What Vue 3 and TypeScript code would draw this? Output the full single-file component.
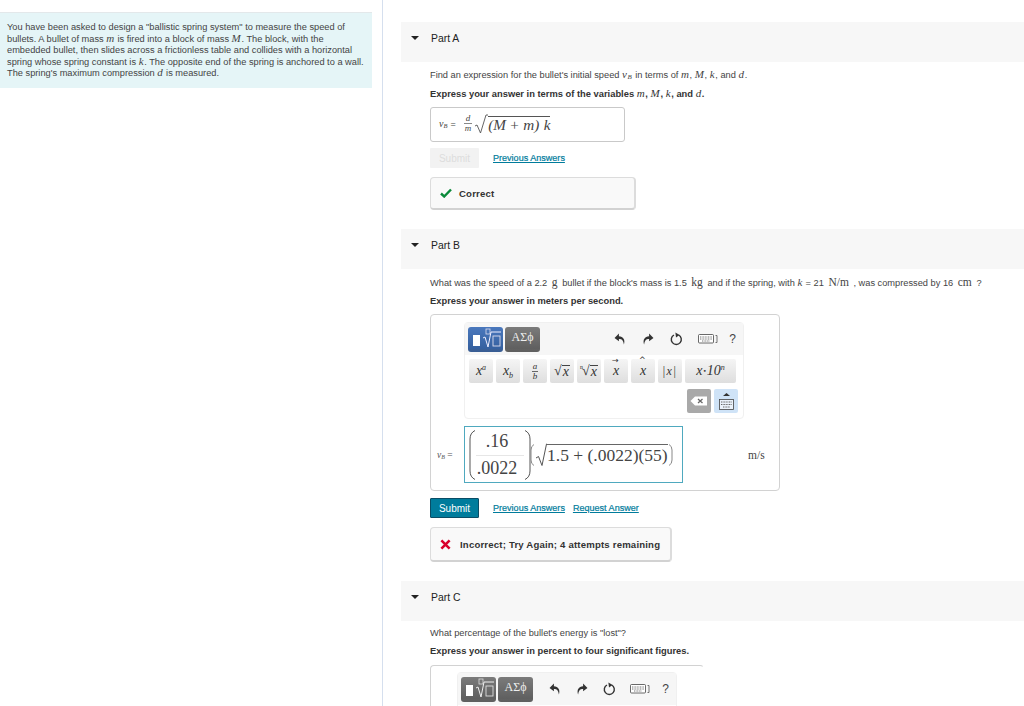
<script setup lang="ts">
const keys = [
  { id: 'pow', wide: false },
  { id: 'sub', wide: false },
  { id: 'frac', wide: false },
  { id: 'sqrt', wide: false },
  { id: 'root', wide: false },
  { id: 'vec', wide: false },
  { id: 'hat', wide: false },
  { id: 'abs', wide: false },
  { id: 'sci', wide: true },
]
</script>

<template>
  <div class="page">
    <aside class="left">
      <div class="intro">
        You have been asked to design a "ballistic spring system" to measure the speed of<br />
        bullets. A bullet of mass <i class="m">m</i> is fired into a block of mass <i class="m">M</i>. The block, with the<br />
        embedded bullet, then slides across a frictionless table and collides with a horizontal<br />
        spring whose spring constant is <i class="m">k</i>. The opposite end of the spring is anchored to a wall.<br />
        The spring's maximum compression <i class="m">d</i> is measured.
      </div>
    </aside>

    <main class="right">
      <section class="part part-a">
        <header class="part-head"><span class="tri"></span>Part A</header>
        <div class="part-body">
          <p class="q">Find an expression for the bullet's initial speed <i class="m">v<sub>B</sub></i> in terms of <i class="m">m</i>, <i class="m">M</i>, <i class="m">k</i>, and <i class="m">d</i>.</p>
          <p class="ins">Express your answer in terms of the variables <i class="m nb">m</i>, <i class="m nb">M</i>, <i class="m nb">k</i>, and <i class="m nb">d</i>.</p>
          <div class="ans-box">
            <span class="vb"><i>v<sub>B</sub></i></span><span class="eq">=</span>
            <span class="small-frac"><i>d</i><i class="den">m</i></span>
            <svg class="rad" width="14" height="20" viewBox="0 0 14 20"><path d="M1 12 L3 11 L6.500 19 L12 1 L14 1" fill="none" stroke="#555" stroke-width="0.9"/></svg>
            <span class="under"><i>(M</i> + <i>m) k</i></span>
          </div>
          <div class="actions">
            <button class="btn off" type="button">Submit</button>
            <a class="link">Previous Answers</a>
          </div>
          <div class="fb fb-ok">
            <svg width="12" height="10" viewBox="0 0 12 10"><path d="M1 5.500 L4.200 8.500 L11 1.500" fill="none" stroke="#0a8a3a" stroke-width="2.400"/></svg>
            <span>Correct</span>
          </div>
        </div>
      </section>

      <section class="part part-b">
        <header class="part-head"><span class="tri"></span>Part B</header>
        <div class="part-body">
          <p class="q">What was the speed of a 2.2 <span class="u">g</span> bullet if the block's mass is 1.5 <span class="u">kg</span> and if the spring, with <i class="m">k</i> = 21 <span class="u">N/m</span> , was compressed by 16 <span class="u">cm</span> ?</p>
          <p class="ins">Express your answer in meters per second.</p>

          <div class="editor">
            <div class="tools">
              <div class="tool-top">
                <span class="tab tab-blue">
                  <svg width="34" height="22" viewBox="0 0 34 22"><rect x="4" y="8" width="7" height="11" fill="#fff"/><rect x="17" y="2" width="4" height="5" fill="none" stroke="#dde" stroke-width=".8"/><path d="M14 11 L16 10 L19 20 L22 5 L32 5" fill="none" stroke="#eef" stroke-width="1"/><rect x="24" y="9" width="7" height="10" fill="none" stroke="#dde" stroke-width=".9"/></svg>
                </span>
                <span class="tab tab-grey">ΑΣϕ</span>
                <span class="acts">
                  <svg class="ic" width="12" height="12" viewBox="0.5 0.5 11 11"><path d="M5 1 L1 5 L5 8 V6 C7.500 5.700 9 7 9.600 11 C11 6.500 9 3.600 5 3.400 Z" fill="#333"/></svg>
                  <svg class="ic" width="12" height="12" viewBox="0.5 0.5 11 11"><path d="M7 1 L11 5 L7 8 V6 C4.500 5.700 3 7 2.400 11 C1 6.500 3 3.600 7 3.400 Z" fill="#333"/></svg>
                  <svg class="ic" width="13" height="14" viewBox="0 0 13 14"><path d="M8.600 3 A5 5 0 1 1 4 3" fill="none" stroke="#333" stroke-width="1.400"/><path d="M5.400 .6 L9.600 3 L6 5.400 Z" fill="#333"/></svg>
                  <svg class="ic kb" width="20" height="10" viewBox="0 0 20 10"><rect x=".5" y=".5" width="15" height="8.500" rx="1" fill="#fff" stroke="#444" stroke-width=".8"/><path d="M2 3h12M2 5h12M4 7h8" stroke="#777" stroke-width="1" stroke-dasharray="1 .6"/><path d="M17.500 1.500h1.500v7h-1.500" fill="none" stroke="#555" stroke-width=".8"/></svg>
                  <span class="help">?</span>
                </span>
              </div>
              <div class="tool-keys">
                <span v-for="k in keys" :key="k.id" class="key" :class="{ wide: k.wide }">
                  <template v-if="k.id === 'pow'"><i>x<sup>a</sup></i></template>
                  <template v-else-if="k.id === 'sub'"><i>x<sub>b</sub></i></template>
                  <template v-else-if="k.id === 'frac'"><span class="kfrac"><i>a</i><i class="kden">b</i></span></template>
                  <template v-else-if="k.id === 'sqrt'">√<i class="ol">x</i></template>
                  <template v-else-if="k.id === 'root'"><sup class="tiny">n</sup><span class="rt">√</span><i class="ol">x</i></template>
                  <template v-else-if="k.id === 'vec'"><i class="acc">x<b>→</b></i></template>
                  <template v-else-if="k.id === 'hat'"><i class="acc">x<b>^</b></i></template>
                  <template v-else-if="k.id === 'abs'"><span class="absk">|<i>x</i>|</span></template>
                  <template v-else><i>x</i><b class="dot">•</b><i>10<sup>n</sup></i></template>
                </span>
              </div>
              <div class="tool-keys end">
                <span class="key2 back">
                  <svg width="18" height="10" viewBox="0 0 18 10"><path d="M5 .5 H17 V9.500 H5 L.5 5 Z" fill="#fff"/><path d="M8 3 L12.500 7 M12.500 3 L8 7" stroke="#666" stroke-width="1.300"/></svg>
                </span>
                <span class="key2 kbd">
                  <svg width="15" height="17" viewBox="0 0 15 17"><path d="M7.500 0 L11 3 H4 Z" fill="#333"/><rect x=".5" y="6.500" width="14" height="10" fill="#eaf2fb" stroke="#444" stroke-width=".8"/><path d="M2 9h11M2 11.500h11M4 14h7" stroke="#666" stroke-width="1" stroke-dasharray="1 .6"/></svg>
                </span>
              </div>
            </div>

            <div class="expr-row">
              <span class="vb lbl"><i>v<sub>B</sub></i> =</span>
              <div class="expr">
                <svg class="par" width="7" height="50" viewBox="0 0 7 50"><path d="M6 .5 Q1 3 1 9 V41 Q1 47 6 49.500" fill="none" stroke="#555" stroke-width="1"/></svg>
                <span class="bigfrac"><span class="num">.16</span><span class="den2">.0022</span></span>
                <svg class="par" width="7" height="50" viewBox="0 0 7 50"><path d="M1 .5 Q6 3 6 9 V41 Q6 47 1 49.500" fill="none" stroke="#555" stroke-width="1"/></svg>
                <svg class="par p2" width="5" height="22" viewBox="0 0 5 22"><path d="M4 .5 Q1 2 1 6 V16 Q1 20 4 21.500" fill="none" stroke="#888" stroke-width="1"/></svg>
                <svg class="rad2" width="12" height="24" viewBox="0 0 12 24"><path d="M1 15 L3.500 13.500 L7 22.500 L11.500 1 L12 1" fill="none" stroke="#555" stroke-width="1"/></svg>
                <span class="under2">1.5 + (.0022)(55)</span>
                <svg class="par" width="5" height="22" viewBox="0 0 5 22"><path d="M1 .5 Q4 2 4 6 V16 Q4 20 1 21.500" fill="none" stroke="#888" stroke-width="1"/></svg>
              </div>
              <span class="unit">m/s</span>
            </div>
          </div>

          <div class="actions a2">
            <button class="btn on" type="button">Submit</button>
            <a class="link">Previous Answers</a>
            <a class="link l2">Request Answer</a>
          </div>
          <div class="fb fb-bad">
            <svg width="11" height="11" viewBox="0 0 12 11"><path d="M1.500 1 L10.500 10 M10.500 1 L1.500 10" stroke="#d9002b" stroke-width="2.800"/></svg>
            <span>Incorrect; Try Again; 4 attempts remaining</span>
          </div>
        </div>
      </section>

      <section class="part part-c">
        <header class="part-head"><span class="tri"></span>Part C</header>
        <div class="part-body">
          <p class="q">What percentage of the bullet's energy is "lost"?</p>
          <p class="ins">Express your answer in percent to four significant figures.</p>
          <div class="editor cut">
            <div class="tools small">
              <div class="tool-top">
                <span class="tab tab-grey">
                  <svg width="34" height="22" viewBox="0 0 34 22"><rect x="4" y="8" width="7" height="11" fill="#fff"/><rect x="17" y="2" width="4" height="5" fill="none" stroke="#ddd" stroke-width=".8"/><path d="M14 11 L16 10 L19 20 L22 5 L32 5" fill="none" stroke="#eee" stroke-width="1"/><rect x="24" y="9" width="7" height="10" fill="none" stroke="#ddd" stroke-width=".9"/></svg>
                </span>
                <span class="tab tab-grey">ΑΣϕ</span>
                <span class="acts">
                  <svg class="ic" width="12" height="12" viewBox="0.5 0.5 11 11"><path d="M5 1 L1 5 L5 8 V6 C7.500 5.700 9 7 9.600 11 C11 6.500 9 3.600 5 3.400 Z" fill="#333"/></svg>
                  <svg class="ic" width="12" height="12" viewBox="0.5 0.5 11 11"><path d="M7 1 L11 5 L7 8 V6 C4.500 5.700 3 7 2.400 11 C1 6.500 3 3.600 7 3.400 Z" fill="#333"/></svg>
                  <svg class="ic" width="13" height="14" viewBox="0 0 13 14"><path d="M8.600 3 A5 5 0 1 1 4 3" fill="none" stroke="#333" stroke-width="1.400"/><path d="M5.400 .6 L9.600 3 L6 5.400 Z" fill="#333"/></svg>
                  <svg class="ic kb" width="20" height="10" viewBox="0 0 20 10"><rect x=".5" y=".5" width="15" height="8.500" rx="1" fill="#fff" stroke="#444" stroke-width=".8"/><path d="M2 3h12M2 5h12M4 7h8" stroke="#777" stroke-width="1" stroke-dasharray="1 .6"/><path d="M17.500 1.500h1.500v7h-1.500" fill="none" stroke="#555" stroke-width=".8"/></svg>
                  <span class="help">?</span>
                </span>
              </div>
            </div>
          </div>
        </div>
      </section>
    </main>
  </div>
</template>

<style>
html, body { margin: 0; background: #fff; overflow: hidden; }
</style>

<style scoped>
.page {
  display: flex;
  width: 1024px;
  height: 706px;
  overflow: hidden;
  font-family: "Liberation Sans", Arial, sans-serif;
  color: #333;
  background: #fff;
}
.left {
  box-sizing: border-box;
  flex: 0 0 383px;
  border-right: 1px solid #d5dfee;
  padding-top: 12px;
}
.intro {
  box-sizing: border-box;
  width: 372px;
  height: 76px;
  padding: 9px 0 0 7px;
  background: #e5f5f7;
  border-top: 1px solid #e3e8ea;
  font-size: 9.250px;
  line-height: 11.600px;
  white-space: nowrap;
  color: #444;
}
.m { font-family: "Liberation Serif", serif; font-size: 11px; line-height: 1px; letter-spacing: .7px; }
.m sub { font-size: 7px; vertical-align: -1px; line-height: 0; }
.nb { font-weight: normal; }
.right {
  flex: 1;
  padding: 22px 0 0 18px;
  min-width: 0;
}
.part-head {
  display: flex;
  align-items: flex-start;
  height: 40px;
  box-sizing: border-box;
  padding: 11px 0 0 10px;
  background: #f7f7f7;
  font-size: 10.400px;
  line-height: 12px;
  color: #222;
}
.tri {
  width: 0;
  height: 0;
  margin: 3px 12px 0 0;
  border-left: 4px solid transparent;
  border-right: 4px solid transparent;
  border-top: 4px solid #222;
}
.part-body { padding: 7px 0 0 29px; }
.q, .ins { margin: 0; line-height: 12px; white-space: nowrap; }
.q { color: #444; font-size: 9.250px; }
.ins { font-weight: 700; font-size: 9.350px; margin-top: 6px; color: #333; }
.part-a .ins { margin-top: 7px; }
.u { font-family: "Liberation Serif", serif; font-size: 11.500px; line-height: 1px; margin: 0 2px; }
.ans-box {
  display: flex;
  align-items: center;
  box-sizing: border-box;
  width: 195px;
  height: 35px;
  margin-top: 7px;
  padding: 0 0 2px 8px;
  border: 1px solid #c9c9c9;
  border-radius: 3px;
  font-family: "Liberation Serif", serif;
  color: #444;
}
.vb { font-size: 10px; }
.vb sub { font-size: 6.500px; vertical-align: -1px; line-height: 0; }
.eq { font: 9px "Liberation Sans", sans-serif; margin: 0 8px 0 3px; }
.small-frac { display: flex; flex-direction: column; align-items: center; font-size: 9px; line-height: 9px; }
.small-frac .den { border-top: 1px solid #888; padding: 0 1px; }
.rad { margin: 0 0 -1px 2px; }
.under { border-top: 1px solid #555; font-size: 15.200px; line-height: 15px; margin-left: 0; white-space: pre; word-spacing: .6px; }
.actions {
  display: flex;
  align-items: center;
  gap: 14px;
  margin-top: 6px;
}
.btn {
  box-sizing: border-box;
  width: 49px;
  height: 20px;
  padding: 0;
  border: 0;
  border-radius: 1px;
  font: 10px "Liberation Sans", sans-serif;
}
.off { background: #f2f2f2; color: #ddd; }
.on { background: #007c9c; color: #fff; border: 1px solid #0a4d66; }
.link { font-size: 9.050px; font-weight: 400; color: #007c9c; text-decoration: underline; -webkit-text-stroke: .2px #007c9c; }
.l2 { margin-left: -6px; }
.fb {
  display: flex;
  align-items: center;
  box-sizing: border-box;
  height: 33px;
  margin-top: 9px;
  padding-left: 9px;
  border: 1px solid #dcdcdc;
  border-bottom: 2px solid #d2d2d2;
  border-right: 2px solid #dcdcdc;
  border-radius: 4px;
  background: #f9f9f9;
  font-size: 9.600px;
  font-weight: 700;
  color: #333;
  letter-spacing: .18px;
}
.fb svg { margin-right: 9px; }
.fb-ok { width: 206px; }
.fb-ok svg { margin-right: 7px; }
.fb-bad { width: 242px; height: 35px; }
.part-b { margin-top: 19px; }
.part-c { margin-top: 19px; }
.part-b .part-body { padding-top: 8px; }
.part-c .part-body { padding-top: 6px; }
.editor {
  box-sizing: border-box;
  width: 350px;
  height: 177px;
  margin-top: 7px;
  padding: 7px 0 0 33px;
  border: 1px solid #d2d2d2;
  border-radius: 4px;
}
.tools {
  box-sizing: border-box;
  width: 280px;
  height: 97px;
  border: 1px solid #f0f0f0;
  border-radius: 4px;
}
.tool-top {
  display: flex;
  align-items: center;
  height: 32px;
  padding: 0 0 0 3px;
  gap: 2px;
  background: #f6f6f6;
}
.tab {
  display: flex;
  align-items: center;
  justify-content: center;
  box-sizing: border-box;
  width: 35px;
  height: 25px;
  border-radius: 3px;
  border-bottom: 3px solid rgba(0, 0, 0, .2);
  font: 12px "Liberation Serif", serif;
  color: #eee;
}
.tab-blue { background: linear-gradient(#4a78bd, #35609f); }
.tab-grey { background: linear-gradient(#7b7b7b, #5f5f5f); }
.acts {
  display: flex;
  align-items: center;
  margin-left: auto;
  padding-right: 7px;
  gap: 16px;
}
.kb { margin-left: -1px; }
.help { font-size: 12px; color: #444; margin-left: -5px; }
.tool-keys {
  display: flex;
  gap: 3px;
  padding: 4px 0 0 4px;
}
.end { justify-content: flex-end; padding: 6px 5px 0 0; gap: 3px; }
.key {
  display: flex;
  align-items: center;
  justify-content: center;
  flex: 0 0 24px;
  height: 24px;
  border-radius: 2px;
  background: linear-gradient(#f5f5f5, #dedede);
  font: 14px "Liberation Serif", serif;
  color: #333;
  white-space: nowrap;
}
.wide { flex: 0 0 51px; }
.key sup { font-size: 8px; vertical-align: 5px; line-height: 0; }
.key sub { font-size: 8px; vertical-align: -3px; line-height: 0; }
.kfrac { display: flex; flex-direction: column; align-items: center; font-size: 9px; line-height: 9px; }
.kden { border-top: 1px solid #666; padding: 0 1px; }
.ol { border-top: 1px solid #444; line-height: 12px; padding: 0 1px; }
.tiny { font-size: 6px !important; align-self: flex-start; margin: 5px 0 0; line-height: 6px !important; }
.rt { margin-left: -1px; }
.acc { position: relative; }
.acc b { position: absolute; left: -1px; top: -7px; font: 8px "DejaVu Sans", sans-serif; }
.absk { font-size: 12px; letter-spacing: 1.500px; }
.dot { font-size: 7px; margin: 0 1px; }
.key2 {
  display: flex;
  align-items: center;
  justify-content: center;
  width: 24px;
  height: 24px;
  border-radius: 2px;
}
.back { background: #a9a9a9; }
.kbd { background: #cfe3f7; }
.expr-row {
  display: flex;
  align-items: center;
  margin: 7px 0 0 -27px;
}
.lbl { width: 27px; font: 9.500px "Liberation Serif", serif; color: #555; }
.lbl i sub { font-size: 6px; }
.expr {
  display: flex;
  align-items: center;
  box-sizing: border-box;
  width: 219px;
  height: 57px;
  padding-left: 4px;
  border: 1px solid #4fa9bf;
  font-family: "Liberation Serif", serif;
  color: #444;
}
.par { flex: none; }
.p2 { margin-left: -1px; }
.bigfrac { display: flex; flex-direction: column; align-items: center; width: 48px; font-size: 18px; line-height: 23px; }
.num { padding: 0 6px 2px 0; }
.den2 { box-sizing: border-box; border-top: 1px solid #e6e6e6; width: 100%; text-align: center; padding: 1px 6px 0 0; }
.rad2 { flex: none; }
.under2 { border-top: 1px solid #666; font-size: 17.500px; line-height: 21px; white-space: nowrap; }
.unit { margin-left: 65px; font: 11.500px "Liberation Serif", serif; color: #444; }
.a2 { margin-top: 7px; }
.cut {
  width: 274px;
  height: 60px;
  margin-top: 8px;
  padding: 6px 0 0 26px;
  border-bottom: 0;
  border-right-color: transparent;
}
.small { width: 220px; height: 40px; }
.small .acts { gap: 15px; }
.small .help { margin-left: -3px; }
</style>
